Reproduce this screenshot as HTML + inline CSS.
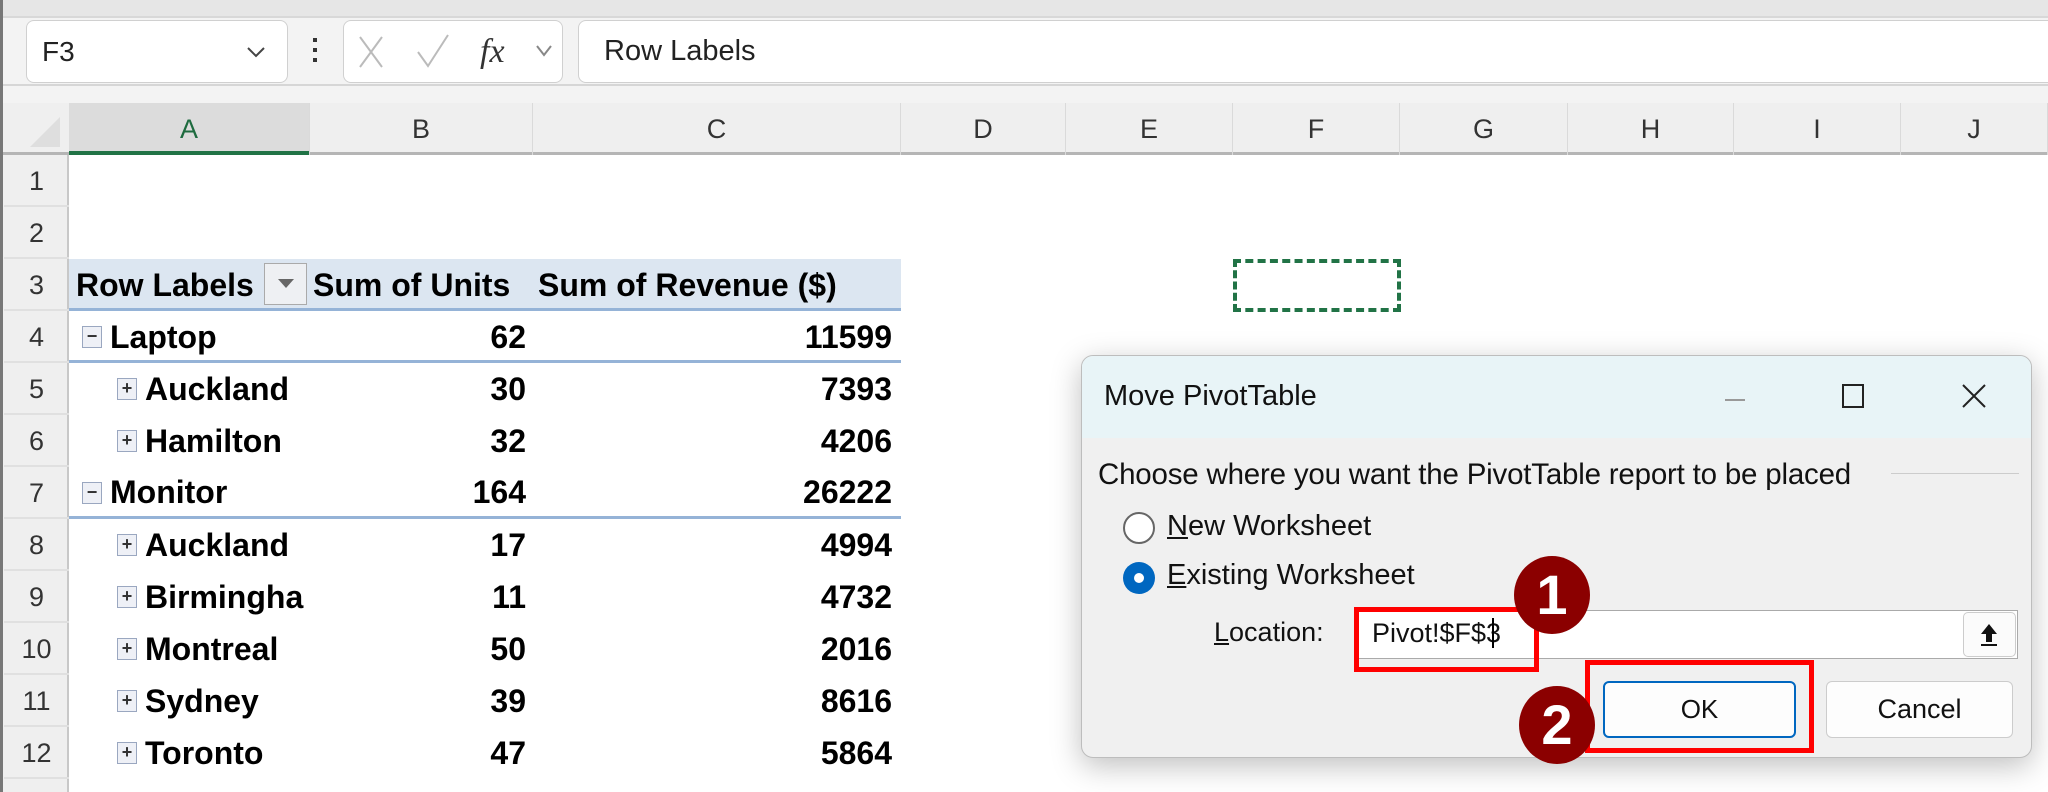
<!DOCTYPE html>
<html><head><meta charset="utf-8"><style>
*{margin:0;padding:0;box-sizing:border-box}
body{width:2048px;height:792px;overflow:hidden;background:#fff;font-family:"Liberation Sans",sans-serif;position:relative}
.a{position:absolute}
.colh{position:absolute;top:103px;height:52px;line-height:52px;text-align:center;font-size:27px;color:#333;border-right:1px solid #dadada}
.rowh{position:absolute;left:4px;width:65px;height:52px;line-height:52px;text-align:center;font-size:27px;color:#333;border-bottom:2px solid #e0e0e0}
.cell{position:absolute;height:52px;line-height:52px;font-size:32px;font-weight:bold;color:#000;white-space:nowrap}
.num{text-align:right}
.bx{position:absolute;width:20px;height:22px;border:1px solid #9aa7c0;background:#eef0f6;font-size:18px;line-height:18px;text-align:center;color:#333;font-weight:bold}
.rb{position:absolute;border:5px solid #f00}
.circ{position:absolute;width:76px;height:78px;border-radius:50%;background:#8b0000;color:#fff;font-weight:bold;font-size:56px;line-height:78px;text-align:center}
</style></head><body>
<div class="a" style="left:0;top:0;width:2048px;height:103px;background:#f3f3f3"></div>
<div class="a" style="left:0;top:0;width:2048px;height:18px;background:#e6e6e6;border-bottom:2px solid #d8d8d8"></div>
<div class="a" style="left:26px;top:20px;width:262px;height:63px;background:#fff;border:1px solid #d0d0d0;border-radius:8px"></div>
<div class="a" style="left:42px;top:36px;font-size:28px;color:#222">F3</div>
<svg class="a" style="left:245px;top:42px" width="22" height="20"><path d="M3 6 L11 14 L19 6" stroke="#444" stroke-width="2" fill="none"/></svg>
<div class="a" style="left:313px;top:38px;width:4px;height:4px;background:#333"></div>
<div class="a" style="left:313px;top:48px;width:4px;height:4px;background:#333"></div>
<div class="a" style="left:313px;top:58px;width:4px;height:4px;background:#333"></div>
<div class="a" style="left:343px;top:20px;width:220px;height:63px;background:#fff;border:1px solid #d0d0d0;border-radius:8px"></div>
<svg class="a" style="left:350px;top:30px" width="210" height="50"><path d="M10 7 L32 37 M32 7 L10 37" stroke="#bbb" stroke-width="2"/><path d="M68 22 L78 36 L98 5" stroke="#bbb" stroke-width="2" fill="none"/><text x="130" y="32" font-family="Liberation Serif" font-style="italic" font-size="34" fill="#333">fx</text><path d="M187 16 L194 25 L201 16" stroke="#888" stroke-width="2" fill="none"/></svg>
<div class="a" style="left:578px;top:20px;width:1480px;height:63px;background:#fff;border:1px solid #d0d0d0;border-radius:8px"></div>
<div class="a" style="left:604px;top:35px;font-size:29px;color:#222">Row Labels</div>
<div class="a" style="left:0;top:84px;width:2048px;height:2px;background:#d6d6d6"></div>
<div class="a" style="left:0;top:103px;width:2048px;height:52px;background:#efefef;border-bottom:3px solid #b5b5b5"></div>
<div class="a" style="left:69px;top:103px;width:241px;height:52px;background:#dcdcdc;border-bottom:4px solid #217346"></div>
<svg class="a" style="left:28px;top:115px" width="36" height="36"><path d="M32 2 L32 32 L2 32 Z" fill="#dedede"/></svg>
<div class="colh" style="left:69px;width:241px;color:#1e6b3f">A</div>
<div class="colh" style="left:310px;width:223px">B</div>
<div class="colh" style="left:533px;width:368px">C</div>
<div class="colh" style="left:901px;width:165px">D</div>
<div class="colh" style="left:1066px;width:167px">E</div>
<div class="colh" style="left:1233px;width:167px">F</div>
<div class="colh" style="left:1400px;width:168px">G</div>
<div class="colh" style="left:1568px;width:166px">H</div>
<div class="colh" style="left:1734px;width:167px">I</div>
<div class="colh" style="left:1901px;width:147px">J</div>
<div class="a" style="left:0;top:155px;width:69px;height:637px;background:#efefef;border-right:2px solid #c8c8c8"></div>
<div class="a" style="left:0;top:0;width:3px;height:792px;background:#777"></div>
<div class="rowh" style="top:155px">1</div><div class="rowh" style="top:207px">2</div><div class="rowh" style="top:259px">3</div><div class="rowh" style="top:311px">4</div><div class="rowh" style="top:363px">5</div><div class="rowh" style="top:415px">6</div><div class="rowh" style="top:467px">7</div><div class="rowh" style="top:519px">8</div><div class="rowh" style="top:571px">9</div><div class="rowh" style="top:623px">10</div><div class="rowh" style="top:675px">11</div><div class="rowh" style="top:727px">12</div>
<div class="a" style="left:69px;top:259px;width:832px;height:52px;background:#dce6f1;border-bottom:3px solid #95b3d7"></div>
<div class="a" style="left:69px;top:360px;width:832px;height:3px;background:#95b3d7"></div>
<div class="a" style="left:69px;top:516px;width:832px;height:3px;background:#95b3d7"></div>
<div class="cell" style="left:76px;top:259px">Row Labels</div>
<div class="a" style="left:264px;top:263px;width:43px;height:42px;border:1px solid #aaa;background:#eef0f3"></div>
<svg class="a" style="left:277px;top:278px" width="18" height="12"><path d="M1 1 L17 1 L9 10 Z" fill="#666"/></svg>
<div class="cell" style="left:313px;top:259px;width:218px;overflow:hidden">Sum of Units</div>
<div class="cell" style="left:538px;top:259px">Sum of Revenue ($)</div>

<div class="bx" style="left:82px;top:326px">−</div><div class="cell" style="left:110px;top:311px">Laptop</div>
<div class="cell num" style="left:310px;width:216px;top:311px">62</div><div class="cell num" style="left:533px;width:359px;top:311px">11599</div>
<div class="bx" style="left:117px;top:378px">+</div><div class="cell" style="left:145px;top:363px">Auckland</div>
<div class="cell num" style="left:310px;width:216px;top:363px">30</div><div class="cell num" style="left:533px;width:359px;top:363px">7393</div>
<div class="bx" style="left:117px;top:430px">+</div><div class="cell" style="left:145px;top:415px">Hamilton</div>
<div class="cell num" style="left:310px;width:216px;top:415px">32</div><div class="cell num" style="left:533px;width:359px;top:415px">4206</div>
<div class="bx" style="left:82px;top:482px">−</div><div class="cell" style="left:110px;top:466px">Monitor</div>
<div class="cell num" style="left:310px;width:216px;top:466px">164</div><div class="cell num" style="left:533px;width:359px;top:466px">26222</div>
<div class="bx" style="left:117px;top:534px">+</div><div class="cell" style="left:145px;top:519px">Auckland</div>
<div class="cell num" style="left:310px;width:216px;top:519px">17</div><div class="cell num" style="left:533px;width:359px;top:519px">4994</div>
<div class="bx" style="left:117px;top:586px">+</div><div class="cell" style="left:145px;top:571px">Birmingha</div>
<div class="cell num" style="left:310px;width:216px;top:571px">11</div><div class="cell num" style="left:533px;width:359px;top:571px">4732</div>
<div class="bx" style="left:117px;top:638px">+</div><div class="cell" style="left:145px;top:623px">Montreal</div>
<div class="cell num" style="left:310px;width:216px;top:623px">50</div><div class="cell num" style="left:533px;width:359px;top:623px">2016</div>
<div class="bx" style="left:117px;top:690px">+</div><div class="cell" style="left:145px;top:675px">Sydney</div>
<div class="cell num" style="left:310px;width:216px;top:675px">39</div><div class="cell num" style="left:533px;width:359px;top:675px">8616</div>
<div class="bx" style="left:117px;top:742px">+</div><div class="cell" style="left:145px;top:727px">Toronto</div>
<div class="cell num" style="left:310px;width:216px;top:727px">47</div><div class="cell num" style="left:533px;width:359px;top:727px">5864</div>
<div class="a" style="left:1233px;top:259px;width:168px;height:53px;border:4px dashed #217346"></div>
<div class="a" style="left:1081px;top:355px;width:951px;height:403px;background:#f0f0f0;border:1px solid #bdbdbd;border-radius:12px;box-shadow:0 8px 30px rgba(0,0,0,0.25);overflow:hidden">
 <div class="a" style="left:0;top:0;width:951px;height:82px;background:#e8f4f7"></div>
 <div class="a" style="left:22px;top:24px;font-size:29px;color:#111">Move PivotTable</div>
 <div class="a" style="left:643px;top:43px;width:20px;height:2px;background:#999"></div>
 <div class="a" style="left:760px;top:28px;width:22px;height:24px;border:2px solid #222"></div>
 <svg class="a" style="left:879px;top:27px" width="26" height="26"><path d="M2 2 L24 24 M24 2 L2 24" stroke="#222" stroke-width="2"/></svg>
 <div class="a" style="left:16px;top:102px;font-size:29.5px;color:#111;letter-spacing:-0.2px">Choose where you want the PivotTable report to be placed</div>
 <div class="a" style="left:809px;top:117px;width:128px;height:1px;background:#ccc"></div>
 <div class="a" style="left:41px;top:156px;width:32px;height:32px;border-radius:50%;border:2px solid #666;background:#fff"></div>
 <div class="a" style="left:85px;top:154px;font-size:29px;color:#111"><u>N</u>ew Worksheet</div>
 <div class="a" style="left:41px;top:206px;width:32px;height:32px;border-radius:50%;background:#0067c0"></div>
 <div class="a" style="left:52px;top:217px;width:10px;height:10px;border-radius:50%;background:#fff"></div>
 <div class="a" style="left:85px;top:203px;font-size:29px;color:#111"><u>E</u>xisting Worksheet</div>
 <div class="a" style="left:132px;top:261px;font-size:27px;color:#111"><u>L</u>ocation:</div>
 <div class="a" style="left:276px;top:254px;width:660px;height:49px;background:#fff;border:1px solid #aaa"></div>
 <div class="a" style="left:290px;top:262px;font-size:27px;color:#111">Pivot!$F$3</div>
 <div class="a" style="left:410px;top:262px;width:2px;height:30px;background:#000"></div>
 <div class="a" style="left:881px;top:256px;width:53px;height:45px;background:#fbfbfb;border:1px solid #ccc;border-radius:5px"></div>
 <svg class="a" style="left:896px;top:266px" width="22" height="26"><path d="M11 2 L3 12 L8 12 L8 20 L14 20 L14 12 L19 12 Z" fill="#111"/><rect x="3" y="22" width="16" height="2" fill="#111"/></svg>
 <div class="a" style="left:521px;top:325px;width:193px;height:57px;background:#fdfdfd;border:2px solid #0067c0;border-radius:6px;text-align:center;line-height:52px;font-size:26px;color:#111">OK</div>
 <div class="a" style="left:744px;top:325px;width:187px;height:57px;background:#fdfdfd;border:1px solid #ccc;border-radius:6px;text-align:center;line-height:55px;font-size:27px;color:#111">Cancel</div>
</div>
<div class="rb" style="left:1354px;top:607px;width:185px;height:65px"></div>
<div class="rb" style="left:1585px;top:660px;width:229px;height:93px"></div>
<div class="circ" style="left:1514px;top:556px">1</div>
<div class="circ" style="left:1519px;top:686px">2</div>
</body></html>
